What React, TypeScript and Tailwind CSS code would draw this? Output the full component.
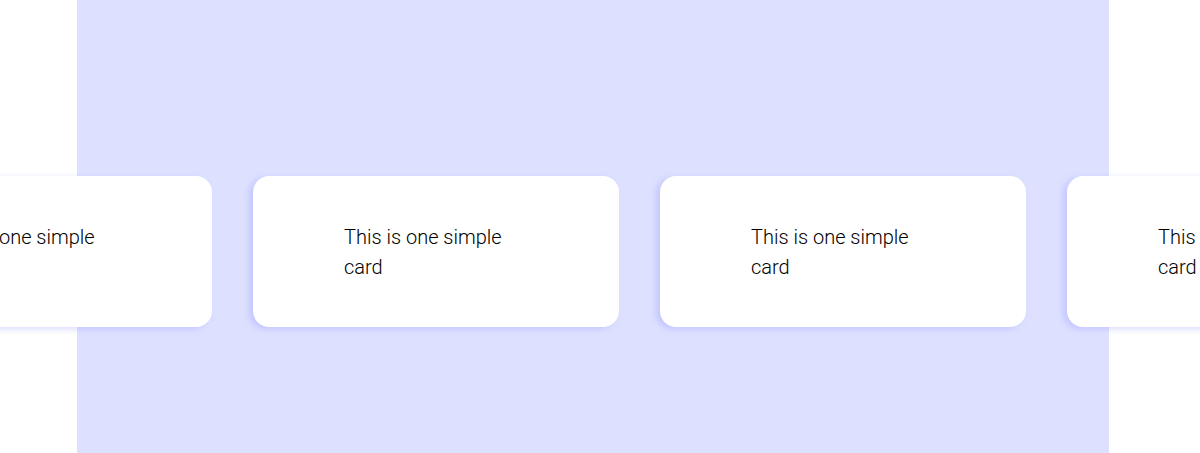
import React from 'react';

const cards = ['This is one simple card', 'This is one simple card', 'This is one simple card', 'This is one simple card'];

const Card: React.FC<{ text: string }> = ({ text }) => (
  <div className="flex h-[151px] w-[366px] shrink-0 items-center rounded-2xl bg-white px-[91px] shadow-[-4px_2px_6px_rgba(150,150,255,0.35)]">
    <p className="text-[20px] font-light leading-[30px] text-black" style={{ fontFamily: 'Roboto, "Liberation Sans", sans-serif' }}>
      {text}
    </p>
  </div>
);

export default function App() {
  return (
    <div className="h-[453px] w-full overflow-hidden bg-white">
      <div className="ml-[77px] h-[453px] w-[1032px] bg-[#dde1ff] pt-[176px]">
        <div className="-ml-[231px] flex gap-[41px]">
          {cards.map((t, i) => (
            <Card key={i} text={t} />
          ))}
        </div>
      </div>
    </div>
  );
}
